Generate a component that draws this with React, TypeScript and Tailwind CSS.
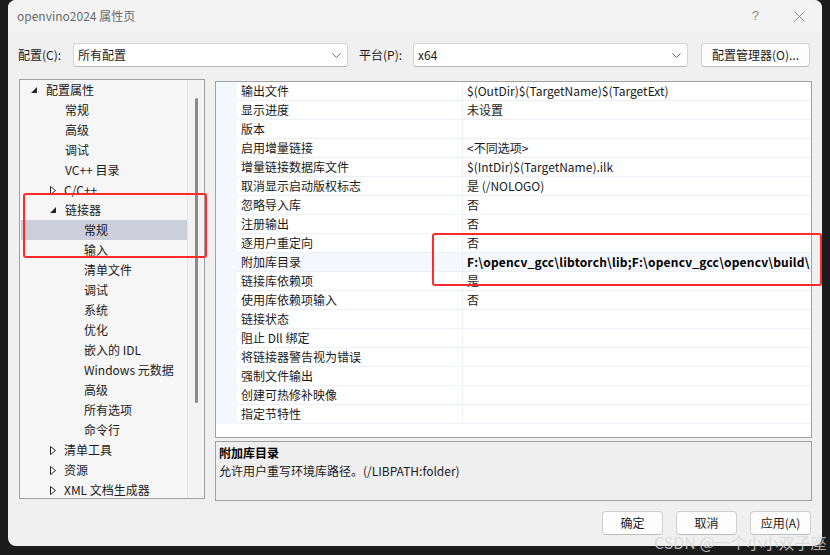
import React from "react";

type TreeRow = { label: string; level: 0 | 1 | 2; toggle?: "open" | "closed"; selected?: boolean };

const tree: TreeRow[] = [
  { label: "配置属性", level: 0, toggle: "open" },
  { label: "常规", level: 1 },
  { label: "高级", level: 1 },
  { label: "调试", level: 1 },
  { label: "VC++ 目录", level: 1 },
  { label: "C/C++", level: 1, toggle: "closed" },
  { label: "链接器", level: 1, toggle: "open" },
  { label: "常规", level: 2, selected: true },
  { label: "输入", level: 2 },
  { label: "清单文件", level: 2 },
  { label: "调试", level: 2 },
  { label: "系统", level: 2 },
  { label: "优化", level: 2 },
  { label: "嵌入的 IDL", level: 2 },
  { label: "Windows 元数据", level: 2 },
  { label: "高级", level: 2 },
  { label: "所有选项", level: 2 },
  { label: "命令行", level: 2 },
  { label: "清单工具", level: 1, toggle: "closed" },
  { label: "资源", level: 1, toggle: "closed" },
  { label: "XML 文档生成器", level: 1, toggle: "closed" },
];

const props: { name: string; value: string; bold?: boolean; active?: boolean }[] = [
  { name: "输出文件", value: "$(OutDir)$(TargetName)$(TargetExt)" },
  { name: "显示进度", value: "未设置" },
  { name: "版本", value: "" },
  { name: "启用增量链接", value: "<不同选项>" },
  { name: "增量链接数据库文件", value: "$(IntDir)$(TargetName).ilk" },
  { name: "取消显示启动版权标志", value: "是 (/NOLOGO)" },
  { name: "忽略导入库", value: "否" },
  { name: "注册输出", value: "否" },
  { name: "逐用户重定向", value: "否" },
  {
    name: "附加库目录",
    value: "F:\\opencv_gcc\\libtorch\\lib;F:\\opencv_gcc\\opencv\\build\\",
    bold: true,
    active: true,
  },
  { name: "链接库依赖项", value: "是" },
  { name: "使用库依赖项输入", value: "否" },
  { name: "链接状态", value: "" },
  { name: "阻止 Dll 绑定", value: "" },
  { name: "将链接器警告视为错误", value: "" },
  { name: "强制文件输出", value: "" },
  { name: "创建可热修补映像", value: "" },
  { name: "指定节特性", value: "" },
];

function Chevron() {
  return (
    <svg width="9" height="5" viewBox="0 0 9 5" className="shrink-0">
      <path d="M0.5 0.5 L4.5 4.5 L8.5 0.5" fill="none" stroke="#6b6b6b" strokeWidth="1" />
    </svg>
  );
}

function Combo({ value, width }: { value: string; width: string }) {
  return (
    <div
      className={`flex h-[24px] items-center justify-between rounded-[3px] border border-[#d4d4d4] border-b-[#b8b8b8] bg-white pl-[4px] pr-[6px] ${width}`}
    >
      <span>{value}</span>
      <Chevron />
    </div>
  );
}

function Toggle({ kind }: { kind: "open" | "closed" }) {
  if (kind === "open")
    return (
      <svg width="6" height="6" viewBox="0 0 6 6">
        <path d="M6 0 L6 6 L0 6 Z" fill="#262626" />
      </svg>
    );
  return (
    <svg width="6" height="9" viewBox="0 0 6 9">
      <path d="M0.5 0.5 L5.5 4.5 L0.5 8.5 Z" fill="#fff" stroke="#262626" strokeWidth="1" />
    </svg>
  );
}

function Button({ label }: { label: string }) {
  return (
    <div className="flex h-[24px] w-[61px] items-center justify-center rounded-[4px] border border-[#d0d0d0] border-b-[#bdbdbd] bg-[#fdfdfd]">
      {label}
    </div>
  );
}

export default function App() {
  return (
    <div className="relative h-[555px] w-[830px] overflow-hidden bg-[#1c1c1c] font-['Noto_Sans_CJK_SC','Noto_Sans',sans-serif] text-[12px] text-[#1a1a1a]">
      <div className="ml-[8px] flex h-[546px] w-[814px] flex-col overflow-hidden rounded-[8px] bg-[#f0f0f0]">
        {/* title bar */}
        <div className="flex h-[32px] shrink-0 items-center bg-[#f3f3f3] pl-[9px] pr-[17px] text-[#6a6a6a]">
          <span className="text-[12px]">openvino2024 属性页</span>
          <span className="ml-auto mr-[35px] font-['Liberation_Sans',sans-serif] text-[13px] font-light text-[#8a8a8a]">?</span>
          <svg width="11" height="11" viewBox="0 0 11 11">
            <path d="M0.5 0.5 L10.5 10.5 M10.5 0.5 L0.5 10.5" stroke="#8a8a8a" strokeWidth="1" />
          </svg>
        </div>

        {/* config row */}
        <div className="mt-[11px] flex h-[24px] shrink-0 items-center pl-[10px]">
          <span className="w-[55px]">配置(C):</span>
          <Combo value="所有配置" width="w-[275px]" />
          <span className="ml-[11px] w-[54px]">平台(P):</span>
          <Combo value="x64" width="w-[275px]" />
          <div className="ml-[13px] flex h-[24px] w-[109px] items-center justify-center rounded-[4px] border border-[#d0d0d0] border-b-[#bdbdbd] bg-[#fdfdfd]">
            配置管理器(O)...
          </div>
        </div>

        {/* main */}
        <div className="mt-[12px] flex shrink-0 pl-[11px]">
          {/* tree */}
          <div className="flex h-[420px] w-[186px] overflow-hidden border border-[#a0a0a0] bg-[#f6f6f6]">
            <div className="flex w-[167px] flex-col">
              {tree.map((r, i) => (
                <div
                  key={i}
                  className={`flex h-[20px] shrink-0 items-center ${r.selected ? "ml-[1px] bg-[#cccedb]" : ""}`}
                >
                  <div
                    className={`flex shrink-0 items-center justify-end ${
                      r.level === 0 ? "w-[17px]" : r.level === 1 ? "w-[36px]" : "w-[55px]"
                    } ${r.selected ? "-ml-[1px]" : ""}`}
                  >
                    {r.toggle && <Toggle kind={r.toggle} />}
                  </div>
                  <span className={`whitespace-nowrap ${r.toggle === "closed" ? "ml-[8px]" : "ml-[9px]"}`}>
                    {r.label}
                  </span>
                </div>
              ))}
            </div>
            <div className="flex w-[17px] justify-center border-l border-[#e4e4e4] bg-[#f3f3f3] pt-[18px]">
              <div className="h-[305px] w-[3px] rounded-full bg-[#8a8a8a]" />
            </div>
          </div>

          {/* right column */}
          <div className="ml-[10px] flex w-[597px] flex-col">
            <div className="mt-[2px] h-[357px] overflow-hidden border border-[#a0a0a0] bg-white">
              {props.map((p, i) => (
                <div key={i} className="flex h-[19px] items-stretch">
                  <div className="w-[21px] shrink-0 bg-[#f4f7fc]" />
                  <div
                    className={`flex w-[226px] shrink-0 items-center border-b border-r border-[#edf0f6] pl-[4px] ${
                      p.active ? "bg-[#f4f7fc]" : ""
                    }`}
                  >
                    {p.name}
                  </div>
                  <div
                    className={`flex min-w-0 flex-1 items-center overflow-hidden whitespace-nowrap border-b border-[#edf0f6] pl-[4px] ${
                      p.bold ? "font-bold tracking-[0.2px] text-black" : ""
                    } ${p.active ? "bg-[#f4f7fc]" : ""}`}
                  >
                    {p.value}
                  </div>
                </div>
              ))}
            </div>
            <div className="mt-[3px] h-[60px] border border-[#a0a0a0] bg-[#efefef] pl-[3px] pt-[2px]">
              <div className="font-bold leading-[18px] text-black">附加库目录</div>
              <div className="leading-[18px]">允许用户重写环境库路径。(/LIBPATH:folder)</div>
            </div>
          </div>
        </div>

        {/* buttons */}
        <div className="mt-[10px] flex justify-end gap-[13px] pr-[11px]">
          <Button label="确定" />
          <Button label="取消" />
          <Button label="应用(A)" />
        </div>
      </div>

      {/* highlight boxes */}
      <div className="pointer-events-none absolute left-[23px] top-[193px] h-[65px] w-[184px] rounded-[3px] border-[2.5px] border-[#ff2a2a]" />
      <div className="pointer-events-none absolute left-[432px] top-[233px] h-[53px] w-[390px] rounded-[3px] border-[2.5px] border-[#ff2a2a]" />

      {/* watermark */}
      <div className="pointer-events-none absolute left-[654px] top-[532px] whitespace-nowrap text-[16px] leading-[20px] text-[#d8d8d8]/80">
        CSDN @一个小小双子座
      </div>
    </div>
  );
}
